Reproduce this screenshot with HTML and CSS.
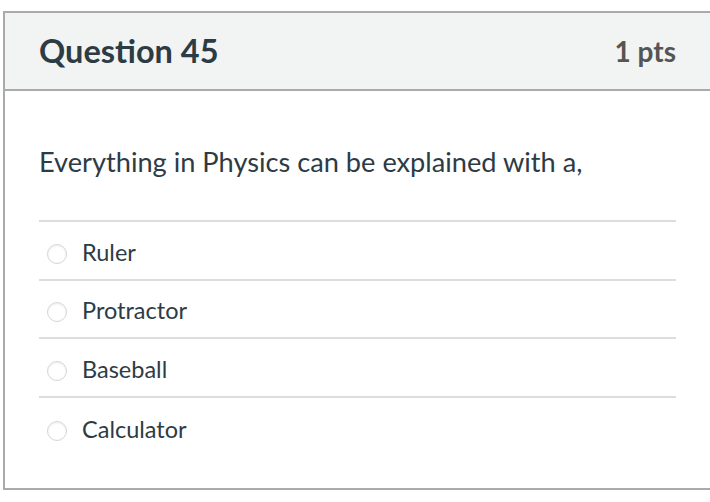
FILE: index.html
```html
<!DOCTYPE html>
<html>
<head>
<meta charset="utf-8">
<link rel="stylesheet" href="styles.css">
</head>
<body>
<div class="card">
  <div class="header">
    <h2 class="title">Question 45</h2>
    <div class="pts">1 pts</div>
  </div>
  <div class="content">
    <p class="question">Everything in Physics can be explained with a,</p>
    <div class="answers">
      <label class="answer"><span class="radio"></span><span class="label">Ruler</span></label>
      <label class="answer"><span class="radio"></span><span class="label">Protractor</span></label>
      <label class="answer"><span class="radio"></span><span class="label">Baseball</span></label>
      <label class="answer"><span class="radio"></span><span class="label">Calculator</span></label>
    </div>
  </div>
</div>
</body>
</html>
```

FILE: styles.css
```css
html, body {
  margin: 0;
  padding: 0;
  overflow: hidden;
  background: #fff;
  font-family: Lato, "Open Sans", sans-serif;
  color: #2d3b45;
}
.card {
  margin: 11px 0 0 3px;
  width: 709px;
  height: 479px;
  border: 2px solid #aaaaaa;
  box-sizing: border-box;
}
.header {
  display: flex;
  align-items: center;
  justify-content: space-between;
  background: #f2f3f3;
  height: 76px;
  border-bottom: 2px solid #aaaaaa;
  padding: 0 34px;
}
.title {
  margin: 0;
  font-size: 32.5px;
  line-height: 40px;
  font-weight: 700;
  color: #2d3b45;
}
.pts {
  font-size: 28px;
  line-height: 40px;
  font-weight: 700;
  color: #555555;
}
.content {
  padding: 0 34px;
}
.question {
  margin: 0;
  padding-top: 53px;
  font-size: 27.2px;
  line-height: 36px;
  padding-bottom: 40px;
}
.answers {
  border-top: 2px solid #dddddd;
}
.answer {
  display: flex;
  align-items: center;
  box-sizing: border-box;
  height: 58.67px;
  padding-top: 3px;
  border-bottom: 2px solid #dddddd;
}
.answer:last-child {
  border-bottom: none;
}
.radio {
  width: 18px;
  height: 18px;
  border-radius: 50%;
  border: 1px solid #d6d6d6;
  box-shadow: inset 0 1px 2px rgba(0,0,0,0.08);
  background: #fff;
  margin: 4px 15px 0 8px;
  flex: none;
}
.label {
  font-size: 23.5px;
}
```
